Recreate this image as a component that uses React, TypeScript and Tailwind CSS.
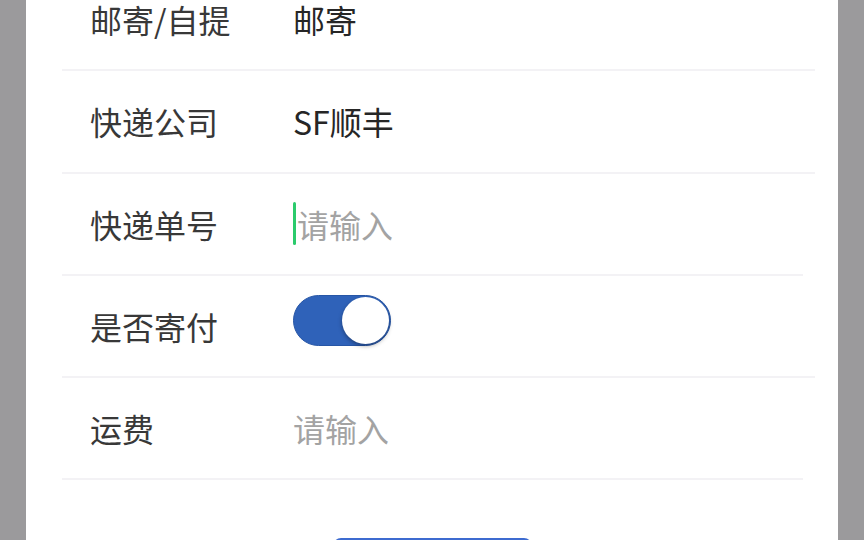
const rows: { label: string; kind: "text" | "input" | "switch"; value?: string; short?: boolean; focused?: boolean }[] = [
  { label: "邮寄/自提", kind: "text", value: "邮寄" },
  { label: "快递公司", kind: "text", value: "SF顺丰" },
  { label: "快递单号", kind: "input", short: true, focused: true },
  { label: "是否寄付", kind: "switch" },
  { label: "运费", kind: "input", short: true },
];

function Toggle() {
  return (
    <div className="mb-[10px] flex h-[51px] w-[98px] items-center justify-end rounded-full border border-[#2756a6] bg-[#2f62b9] px-[1px]">
      <div className="h-[47px] w-[47px] rounded-full bg-white shadow-[0_2px_4px_rgba(0,0,0,0.35)]" />
    </div>
  );
}

export default function App() {
  return (
    <div
      className="h-[540px] w-[864px] overflow-hidden bg-[#9b9a9c] px-[26px]"
      style={{ fontFamily: '"Noto Sans CJK SC", "Noto Sans", sans-serif' }}
    >
      <div className="h-full overflow-hidden bg-white">
        <div className="-mt-[31px]">
          {rows.map((r) => (
            <div
              key={r.label}
              className={
                r.short
                  ? "ml-[36px] mr-[35px] flex h-[102.25px] items-center border-b-2 border-[#f3f2f5] pl-[28px]"
                  : "ml-[36px] mr-[23px] flex h-[102.25px] items-center border-b-2 border-[#f3f2f5] pl-[28px]"
              }
            >
              <div className="w-[203px] text-[32px] leading-none text-[#383838]">{r.label}</div>
              {r.kind === "text" && <div className="text-[32px] leading-none text-[#262626]">{r.value}</div>}
              {r.kind === "input" && (
                <div className="flex items-center">
                  {r.focused && <div className="mr-[1px] h-[43px] w-[3px] rounded-sm bg-[#2bcb6c]" />}
                  <span className="text-[32px] leading-none text-[#a3a3a3]">请输入</span>
                </div>
              )}
              {r.kind === "switch" && <Toggle />}
            </div>
          ))}
        </div>
        <div className="mt-[58px] flex justify-center">
          <div className="h-[80px] w-[199px] rounded-lg bg-[#3d6bd0]" />
        </div>
      </div>
    </div>
  );
}
